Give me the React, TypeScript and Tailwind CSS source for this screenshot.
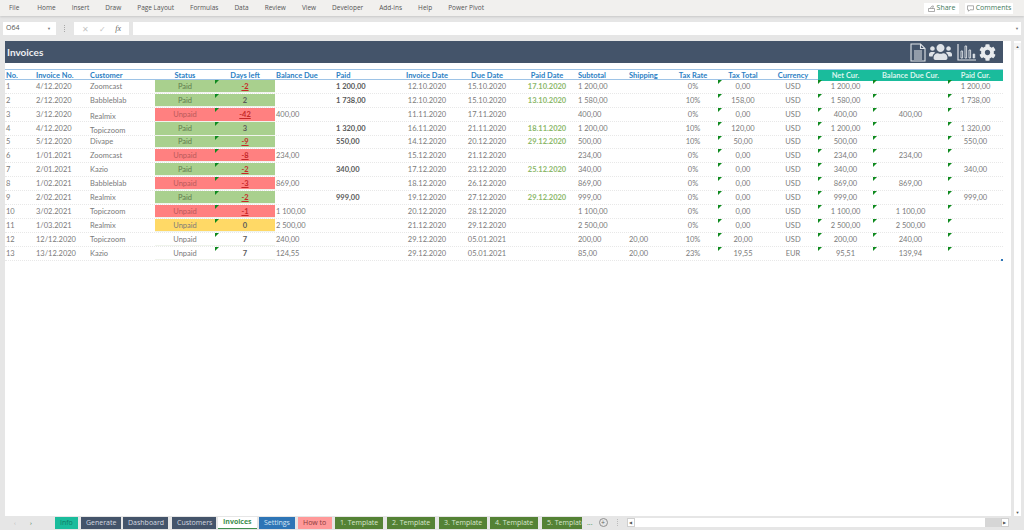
import React from 'react';
import { FaCog, FaUsers } from 'react-icons/fa';

const menu = ['File', 'Home', 'Insert', 'Draw', 'Page Layout', 'Formulas', 'Data', 'Review', 'View', 'Developer', 'Add-ins', 'Help', 'Power Pivot'];

const grid = 'grid grid-cols-[30px_54px_66px_60px_60px_60px_62px_60px_60px_60px_51px_40px_50px_50px_50px_55px_75px_55px]';

const rows = [
  ['1', '4/12.2020', 'Zoomcast', 'Paid', '-2', '', '1 200,00', '12.10.2020', '15.10.2020', '17.10.2020', '1 200,00', '', '0%', '0,00', 'USD', '1 200,00', '', '1 200,00'],
  ['2', '2/12.2020', 'Babbleblab', 'Paid', '2', '', '1 738,00', '12.10.2020', '15.10.2020', '13.10.2020', '1 580,00', '', '10%', '158,00', 'USD', '1 580,00', '', '1 738,00'],
  ['3', '3/12.2020', 'Realmix', 'Unpaid', '-42', '400,00', '', '11.11.2020', '17.11.2020', '', '400,00', '', '0%', '0,00', 'USD', '400,00', '400,00', ''],
  ['4', '4/12.2020', 'Topiczoom', 'Paid', '3', '', '1 320,00', '16.11.2020', '21.11.2020', '18.11.2020', '1 200,00', '', '10%', '120,00', 'USD', '1 200,00', '', '1 320,00'],
  ['5', '5/12.2020', 'Divape', 'Paid', '-9', '', '550,00', '14.12.2020', '20.12.2020', '29.12.2020', '500,00', '', '10%', '50,00', 'USD', '500,00', '', '550,00'],
  ['6', '1/01.2021', 'Zoomcast', 'Unpaid', '-8', '234,00', '', '15.12.2020', '21.12.2020', '', '234,00', '', '0%', '0,00', 'USD', '234,00', '234,00', ''],
  ['7', '2/01.2021', 'Kazio', 'Paid', '-2', '', '340,00', '17.12.2020', '23.12.2020', '25.12.2020', '340,00', '', '0%', '0,00', 'USD', '340,00', '', '340,00'],
  ['8', '1/02.2021', 'Babbleblab', 'Unpaid', '-3', '869,00', '', '18.12.2020', '26.12.2020', '', '869,00', '', '0%', '0,00', 'USD', '869,00', '869,00', ''],
  ['9', '2/02.2021', 'Realmix', 'Paid', '-2', '', '999,00', '19.12.2020', '27.12.2020', '29.12.2020', '999,00', '', '0%', '0,00', 'USD', '999,00', '', '999,00'],
  ['10', '3/02.2021', 'Topiczoom', 'Unpaid', '-1', '1 100,00', '', '20.12.2020', '28.12.2020', '', '1 100,00', '', '0%', '0,00', 'USD', '1 100,00', '1 100,00', ''],
  ['11', '1/03.2021', 'Realmix', 'Unpaid', '0', '2 500,00', '', '21.12.2020', '29.12.2020', '', '2 500,00', '', '0%', '0,00', 'USD', '2 500,00', '2 500,00', ''],
  ['12', '12/12.2020', 'Topiczoom', 'Unpaid', '7', '240,00', '', '29.12.2020', '05.01.2021', '', '200,00', '20,00', '10%', '20,00', 'USD', '200,00', '240,00', ''],
  ['13', '13/12.2020', 'Kazio', 'Unpaid', '7', '124,55', '', '29.12.2020', '05.01.2021', '', '85,00', '20,00', '23%', '19,55', 'EUR', '95,51', '139,94', ''],
];

const headers = ['No.', 'Invoice No.', 'Customer', 'Status', 'Days left', 'Balance Due', 'Paid', 'Invoice Date', 'Due Date', 'Paid Date', 'Subtotal', 'Shipping', 'Tax Rate', 'Tax Total', 'Currency', 'Net Cur.', 'Balance Due Cur.', 'Paid Cur.'];

const leftCols = [0, 1, 2, 5, 6, 10, 11];
const flagged = [4, 13, 15, 16, 17];

function Flag() {
  return <span className="absolute left-0 top-0 h-0 w-0 border-r-[4px] border-t-[4px] border-r-transparent border-t-[#0f8a1f]" />;
}

function bandClass(row: string[]) {
  if (row[4] === '0') return 'bg-[#ffd966]';
  if (row[4] === '7') return '';
  return row[3] === 'Paid' ? 'bg-[#a9d08e]' : 'bg-[#ff8080]';
}

function Row({ row }: { row: string[] }) {
  const band = bandClass(row);
  const low = row[0] === '3' || row[0] === '4';
  const overdue = row[3] === 'Unpaid' && row[4] !== '0' && row[4] !== '7';
  return (
    <div className={`${grid} h-[13.9px] border-b border-dotted border-[#e8e8e8] text-[#7a7a7a]`}>
      {row.map((value, i) => {
        let cls = leftCols.includes(i) ? 'justify-start pl-px' : 'justify-center';
        if (i === 3 || i === 4) cls += ` ${band} shadow-[inset_0_-1px_0_#f0f4ec]`;
        if (i === 3 && overdue) cls += ' text-[#b85a5a]';
        if (i === 3 && row[3] === 'Paid') cls += ' text-[#5f7a4d]';
        if (i === 4) cls += ' font-bold text-[#5a5a5a]';
        if (i === 4 && value.startsWith('-')) cls += ' text-[#c62828] underline';
        if (i === 6) cls += ' font-bold text-[#5a5a5a]';
        if (i === 9) cls += ' font-bold text-[#8cb86a]';
        if (i === 2 && low) cls += ' pt-[3px]';
        return (
          <div key={i} className={`relative flex items-center whitespace-nowrap ${cls}`}>
            {flagged.includes(i) && <Flag />}
            {value}
          </div>
        );
      })}
    </div>
  );
}

function DocIcon() {
  return (
    <svg width="16" height="19" viewBox="0 0 16 19" fill="none" stroke="#dfe3e8" strokeWidth="1.1">
      <path d="M1 1h9.5L15 5.5V18H1z" />
      <path d="M10.5 1v4.5H15" />
      <path d="M4 8h8M4 10h8M4 12h8M4 14h8M4 16h8" strokeWidth="1" />
    </svg>
  );
}

function ChartIcon() {
  return (
    <svg width="19" height="17" viewBox="0 0 19 17" fill="none" stroke="#dfe3e8">
      <path d="M1 0v16h18" strokeWidth="1.2" />
      <path d="M4 14V7h1.6v7zM8 14V2h1.6v12zM12 14V6h1.6v8z" strokeWidth="0.9" />
      <path d="M16 14v-4h1.8v4z" fill="#dfe3e8" strokeWidth="0.6" />
    </svg>
  );
}

function TabBar() {
  const tabs = [
    { name: 'Info', w: 'w-[23px] ml-[55px]', cls: 'bg-[#1abc9c] text-[#0e7a64]' },
    { name: 'Generate', w: 'w-[40px] ml-[3px]', cls: 'bg-[#44546a] text-[#d5dae0]' },
    { name: 'Dashboard', w: 'w-[45px] ml-[2px]', cls: 'bg-[#44546a] text-[#d5dae0]' },
    { name: 'Customers', w: 'w-[44px] ml-[4px]', cls: 'bg-[#44546a] text-[#d5dae0]' },
    { name: 'Invoices', w: 'w-[39px] ml-[2px]', cls: 'bg-white text-[#3f8f4f] font-bold border-b border-[#3f8f4f]' },
    { name: 'Settings', w: 'w-[36px] ml-[2px]', cls: 'bg-[#2e75b6] text-[#d6e6f5]' },
    { name: 'How to', w: 'w-[34px] ml-[3px]', cls: 'bg-[#ff9999] text-[#8c3a3a]' },
    { name: '1. Template', w: 'w-[48px] ml-[3px]', cls: 'bg-[#548235] text-[#d9e6cf]' },
    { name: '2. Template', w: 'w-[48px] ml-[4px]', cls: 'bg-[#548235] text-[#d9e6cf]' },
    { name: '3. Template', w: 'w-[48px] ml-[4px]', cls: 'bg-[#548235] text-[#d9e6cf]' },
    { name: '4. Template', w: 'w-[48px] ml-[3px]', cls: 'bg-[#548235] text-[#d9e6cf]' },
    { name: '5. Template', w: 'w-[40px] ml-[4px]', cls: 'bg-[#548235] text-[#d9e6cf]' },
  ];
  return (
    <div className="relative flex h-[14px] items-start bg-[#e6e6e6] pt-px font-['Open_Sans',sans-serif] text-[7px]">
      <span className="absolute left-[14px] top-[3px] text-[6px] text-[#b5b5b5]">‹</span>
      <span className="absolute left-[30px] top-[3px] text-[6px] text-[#2f6b3f]">›</span>
      {tabs.map((t) => (
        <div key={t.name} className={`flex h-[12px] shrink-0 items-center overflow-hidden whitespace-nowrap pl-[5px] ${t.w} ${t.cls}`}>
          {t.name}
        </div>
      ))}
      <span className="ml-[5px] mt-[1px] text-[#3f8f4f]">...</span>
      <span className="ml-[6px] mt-[1px] flex h-[9px] w-[9px] items-center justify-center rounded-full border border-[#8f8f8f] text-[7px] leading-none text-[#666666]">+</span>
      <span className="ml-[9px] mt-[2px] h-[7px] w-px border-l border-dotted border-[#bcbcbc]" />
      <div className="ml-[9px] mt-[1px] flex h-[9px] w-[382px] items-stretch bg-[#d6d6d6]">
        <span className="flex w-[8px] items-center justify-center border border-[#cfcfcf] bg-white text-[4px] text-[#555555]">◀</span>
        <span className="w-[350px] bg-white" />
        <span className="flex-1" />
        <span className="flex w-[8px] items-center justify-center border border-[#cfcfcf] bg-white text-[4px] text-[#555555]">▶</span>
      </div>
    </div>
  );
}

export default function App() {
  return (
    <div className="flex h-[530px] w-[1024px] flex-col overflow-hidden bg-[#e6e6e6] font-['Lato',sans-serif] text-[7.5px]">
      {/* ribbon tabs */}
      <div className="flex h-[16px] items-center justify-between bg-[#f1f0ee] pl-[9px] pr-[11px] font-['Open_Sans',sans-serif] text-[6.5px] text-[#555555] shadow-[0_1px_2px_#c8c8c8]">
        <div className="flex gap-[16px]">
          {menu.map((m, i) => (
            <span key={m} className={i === 1 ? 'ml-[2px]' : ''}>{m}</span>
          ))}
        </div>
        <div className="flex gap-[6px] text-[7px] text-[#3f7a5a]">
          <span className="flex h-[11px] w-[35px] items-center justify-center gap-[2px] bg-white">
            <svg width="7" height="7" viewBox="0 0 7 7" fill="none" stroke="#8a8a8a" strokeWidth="0.7"><path d="M.5 3.5h6v3h-6zM2 3.5l2-2.5h1.5l-1 2.5" /></svg>
            Share
          </span>
          <span className="flex h-[11px] w-[48px] items-center justify-center gap-[2px] bg-white">
            <svg width="7" height="7" viewBox="0 0 7 7" fill="none" stroke="#8a8a8a" strokeWidth="0.7"><path d="M.5.8h6v4H3L1.5 6.3V4.8h-1z" /></svg>
            Comments
          </span>
        </div>
      </div>

      {/* formula bar */}
      <div className="flex h-[25px] items-center pl-[3px] pr-[3px] text-[#555555]">
        <div className="flex h-[13px] w-[53px] items-center justify-between bg-white pl-[3px] pr-[5px] font-['Open_Sans',sans-serif] text-[7px]">
          O64
          <span className="text-[4px] text-[#777777]">▼</span>
        </div>
        <span className="ml-[8px] h-[7px] w-px border-l border-dotted border-[#a8a8a8]" />
        <div className="ml-[9px] flex h-[13px] w-[55px] items-center justify-around bg-white px-[3px] text-[8px] text-[#c4c4c4]">
          <span>✕</span>
          <span>✓</span>
          <span className="font-['Liberation_Serif',serif] italic text-[#666666]">fx</span>
        </div>
        <div className="ml-[4px] flex h-[13px] flex-1 items-center justify-end bg-white pr-[2px] text-[4px] text-[#777777]">▼</div>
      </div>

      {/* sheet */}
      <div className="flex min-h-0 flex-1">
        <div className="w-[5px] shrink-0 bg-[#e6e6e6]" />
        <div className="min-w-0 flex-1 bg-white">
          <div className="flex h-[22px] w-[998px] items-center justify-between bg-[#44546a] pl-[2px] pr-[7px]">
            <span className="text-[10px] font-bold text-[#eef0f3]">Invoices</span>
            <div className="flex items-center">
              <DocIcon />
              <FaUsers className="ml-[3px] h-[20px] w-[23px] text-[#dfe3e8]" />
              <span className="ml-[5px]"><ChartIcon /></span>
              <FaCog className="ml-[3px] h-[17px] w-[17px] text-[#e8ebee]" />
            </div>
          </div>

          <div className="relative mt-[6px] w-[998px]">
            <div className={`${grid} h-[11px] border-y border-[#9dc3e6] font-bold text-[#2a80c4]`}>
              {headers.map((h, i) => (
                <div
                  key={h}
                  className={`flex items-center whitespace-nowrap ${leftCols.includes(i) ? 'justify-start pl-px' : 'justify-center'} ${i >= 15 ? 'bg-[#1abc9c] text-[#d9f5ee]' : ''}`}
                >
                  {h}
                </div>
              ))}
            </div>
            {rows.map((row) => (
              <Row key={row[0]} row={row} />
            ))}
            <span className="absolute bottom-0 right-0 h-[2px] w-[2px] bg-[#2e75b6]" />
          </div>
        </div>
        {/* vertical scrollbar */}
        <div className="flex w-[13px] shrink-0 flex-col border-x-[3px] border-[#e6e6e6] bg-white">
          <span className="mt-[2px] flex h-[7px] items-center justify-center bg-[#f4f4f4] text-[4px] text-[#555555]">▲</span>
          <span className="flex-1" />
          <span className="flex h-[7px] items-center justify-center bg-white text-[4px] text-[#555555]">▼</span>
        </div>
      </div>

      <TabBar />
    </div>
  );
}
